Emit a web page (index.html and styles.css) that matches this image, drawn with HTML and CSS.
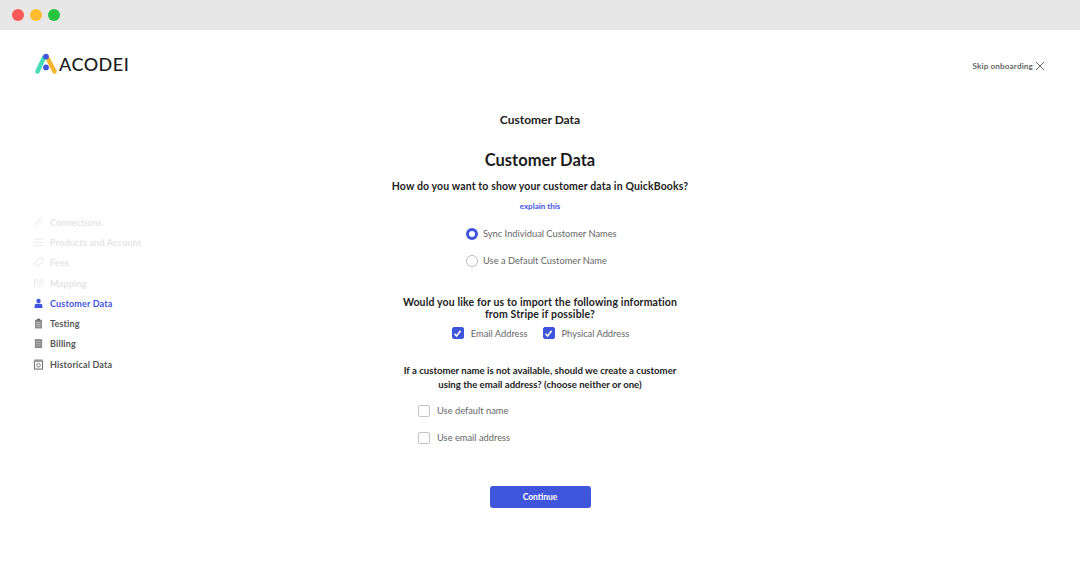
FILE: index.html
```html
<!DOCTYPE html>
<html lang="en">
<head>
    <meta charset="UTF-8">
    <title>Customer Data</title>
    <link rel="stylesheet" href="styles.css">
</head>
<body>

<!-- Window bar -->
<div class="window-bar">
    <span class="dot dot-red"></span>
    <span class="dot dot-yellow"></span>
    <span class="dot dot-green"></span>
</div>

<div class="header">
    <div class="logo">
        <svg class="logo-mark" width="22" height="22" viewBox="0 0 22 22">
            <path d="M2.5 18.5 L9 4.5" stroke="#43dcb4" stroke-width="4.4" stroke-linecap="round" fill="none"/>
            <path d="M13 6 L19.5 18.5" stroke="#f6b62d" stroke-width="4.4" stroke-linecap="round" fill="none"/>
            <circle cx="11" cy="3.6" r="2.9" fill="#3f55dc"/>
            <circle cx="11" cy="14.4" r="2.9" fill="#3f55dc"/>
        </svg>
        <span class="logo-text">ACODEI</span>
    </div>
    <div class="skip">
        <span>Skip onboarding</span>
        <svg width="10" height="10" viewBox="0 0 10 10">
            <path d="M1 1 L9 9 M9 1 L1 9" stroke="#555" stroke-width="0.9" fill="none"/>
        </svg>
    </div>
</div>

<div class="layout">
    <!-- Steps -->
    <ul class="steps">
        <li class="step faded">
            <svg class="step-icon" viewBox="0 0 12 12"><path d="M2 8 L7 2.5 Q8.5 1.2 10 2.3 Q11 3.6 9.7 5 L5 10 Q3.6 11 2.4 10 Q1.2 9 2 8 Z M4.5 7.5 L7.7 4.3" stroke="#8a8a8a" fill="none"/></svg>
            Connections
        </li>
        <li class="step faded">
            <svg class="step-icon" viewBox="0 0 12 12"><path d="M1 2.5 H11 M1 6 H11 M1 9.5 H11" stroke="#8a8a8a" stroke-width="1.2" fill="none"/></svg>
            Products and Account
        </li>
        <li class="step faded">
            <svg class="step-icon" viewBox="0 0 12 12"><path d="M1.5 7 L7 1.5 H10.5 V5 L5 10.5 Z" stroke="#8a8a8a" stroke-width="1.2" fill="none"/></svg>
            Fees
        </li>
        <li class="step faded">
            <svg class="step-icon" viewBox="0 0 12 12"><path d="M1.5 2 V10 M4.5 2 V8 M7.5 2 V10 M10.5 2 V8 M1.5 2 H4.5 M7.5 2 H10.5" stroke="#8a8a8a" stroke-width="1.2" fill="none"/></svg>
            Mapping
        </li>
        <li class="step active">
            <svg class="step-icon" viewBox="0 0 12 12"><circle cx="6" cy="3.2" r="2.4" fill="#3f55dc"/><path d="M1.7 11 V8.6 Q1.7 6.4 4 6.4 H8 Q10.3 6.4 10.3 8.6 V11 Z" fill="#3f55dc"/></svg>
            Customer Data
        </li>
        <li class="step">
            <svg class="step-icon" viewBox="0 0 12 12"><rect x="2.2" y="2" width="7.6" height="9.4" fill="#8c8c8c"/><rect x="4.2" y="0.8" width="3.6" height="2" fill="#666"/><path d="M3.6 5 H8.4 M3.6 7 H8.4 M3.6 9 H8.4" stroke="#ddd" stroke-width="0.7"/></svg>
            Testing
        </li>
        <li class="step">
            <svg class="step-icon" viewBox="0 0 12 12"><rect x="2" y="1.2" width="8" height="9.8" fill="#8c8c8c"/><path d="M3.5 3.6 H8.5 M3.5 5.8 H8.5 M3.5 8 H8.5" stroke="#bbb" stroke-width="0.8"/></svg>
            Billing
        </li>
        <li class="step">
            <svg class="step-icon" viewBox="0 0 12 12"><rect x="1.6" y="2.4" width="8.8" height="8.6" fill="none" stroke="#777" stroke-width="1.2"/><path d="M1.6 1.2 H10.4" stroke="#777" stroke-width="1.2"/><circle cx="6" cy="6.8" r="2" fill="none" stroke="#777"/></svg>
            Historical Data
        </li>
    </ul>

    <!-- Onboarding form -->
    <div class="form-col">
        <div class="crumb">Customer Data</div>
        <h1>Customer Data</h1>
        <h2 class="question-main">How do you want to show your customer data in QuickBooks?</h2>
        <a class="explain">explain this</a>

        <div class="radio-group">
            <label class="option"><span class="radio checked"></span>Sync Individual Customer Names</label>
            <label class="option"><span class="radio"></span>Use a Default Customer Name</label>
        </div>

        <h3 class="question-import">Would you like for us to import the following information<br>from Stripe if possible?</h3>
        <div class="check-row">
            <label class="option">
                <span class="box checked"><svg width="9" height="9" viewBox="0 0 9 9"><path d="M1.5 4.8 L3.6 7 L7.6 1.8" stroke="#fff" stroke-width="1.6" fill="none"/></svg></span>
                Email Address
            </label>
            <label class="option">
                <span class="box checked"><svg width="9" height="9" viewBox="0 0 9 9"><path d="M1.5 4.8 L3.6 7 L7.6 1.8" stroke="#fff" stroke-width="1.6" fill="none"/></svg></span>
                Physical Address
            </label>
        </div>

        <h3 class="question-name">If a customer name is not available, should we create a customer<br>using the email address? (choose neither or one)</h3>
        <div class="check-stack">
            <label class="option"><span class="box"></span>Use default name</label>
            <label class="option"><span class="box"></span>Use email address</label>
        </div>

        <button type="button">Continue</button>
    </div>
</div>

</body>
</html>
```

FILE: styles.css
```css
body {
    font-family: "Lato", "Open Sans", sans-serif;
    margin: 0;
    padding: 0;
    background-color: #fff;
    color: #222;
    height: 576px;
    overflow: hidden;
}

/* Window bar */
.window-bar {
    height: 30px;
    background-color: #e8e7e8;
    display: flex;
    align-items: center;
    gap: 6px;
    padding: 0 0 0 12px;
    box-sizing: border-box;
}

.dot {
    width: 12px;
    height: 12px;
    border-radius: 50%;
}

.dot-red { background-color: #fd5a57; }
.dot-yellow { background-color: #fdbb2e; }
.dot-green { background-color: #27c440; }

/* Header */
.header {
    display: flex;
    justify-content: space-between;
    align-items: center;
    height: 22px;
    padding: 23px 35px 0 35px;
}

.logo {
    display: flex;
    align-items: center;
    gap: 2px;
}

.logo-text {
    font-size: 18px;
    font-weight: 500;
    letter-spacing: 0.5px;
    color: #1c1c1c;
}

.skip {
    display: flex;
    align-items: center;
    gap: 2px;
    font-size: 8.1px;
    font-weight: 700;
    color: #666;
    letter-spacing: 0.15px;
    padding-top: 3px;
}

/* Layout */
.layout {
    display: grid;
    grid-template-columns: 1fr 400px 1fr;
}

/* Steps */
.steps {
    list-style: none;
    margin: 0;
    padding: 137px 0 0 33px;
}

.step {
    display: flex;
    align-items: center;
    gap: 6px;
    height: 20.3px;
    font-size: 9px;
    font-weight: 700;
    color: #555;
    letter-spacing: 0.17px;
}

.step.faded {
    opacity: 0.16;
}

.step.active {
    color: #3f55dc;
}

.step-icon {
    width: 11px;
    height: 11px;
    flex: none;
}

/* Form */
.form-col {
    display: flex;
    flex-direction: column;
    align-items: center;
    text-align: center;
}

.crumb {
    font-size: 12px;
    font-weight: 700;
    color: #222;
    margin-top: 38px;
    line-height: 14px;
}

h1 {
    font-size: 16.5px;
    font-weight: 700;
    color: #1c1c1c;
    margin: 23px 0 0 0;
    line-height: 20px;
}

.question-main {
    font-size: 10.5px;
    font-weight: 700;
    color: #222;
    margin: 9px 0 0 0;
    line-height: 14px;
    letter-spacing: 0.125px;
}

.explain {
    font-size: 8px;
    font-weight: 700;
    color: #3f55dc;
    margin-top: 8px;
    line-height: 10px;
}

.option {
    display: flex;
    align-items: center;
    font-size: 9.3px;
    color: #666;
    white-space: nowrap;
}

.radio-group {
    display: flex;
    flex-direction: column;
    align-items: flex-start;
    gap: 14px;
    margin-top: 16px;
    width: 150px;
}

.radio {
    width: 12px;
    height: 12px;
    box-sizing: border-box;
    border-radius: 50%;
    border: 1px solid #bbb;
    margin: 0 5px 0 1px;
    flex: none;
}

.radio.checked {
    border: 3.5px solid #3f55dc;
    background-color: #fff;
}

.radio-group .option {
    height: 13px;
}

.question-import {
    font-size: 10.5px;
    font-weight: 700;
    color: #222;
    margin: 29px 0 0 0;
    line-height: 12px;
    letter-spacing: 0.15px;
}

.check-row {
    display: flex;
    gap: 15px;
    margin-top: 7px;
    padding-left: 1px;
}

.box {
    width: 12px;
    height: 12px;
    box-sizing: border-box;
    border: 1px solid #c4c4c4;
    border-radius: 2px;
    margin-right: 7px;
    display: flex;
    align-items: center;
    justify-content: center;
    flex: none;
}

.box.checked {
    background-color: #3f55dc;
    border-color: #3f55dc;
}

.question-name {
    font-size: 9.6px;
    font-weight: 700;
    color: #222;
    margin: 25px 0 0 0;
    line-height: 14px;
}

.check-stack {
    display: flex;
    flex-direction: column;
    align-items: flex-start;
    gap: 14px;
    margin-top: 12px;
    width: 246px;
}

.check-stack .option {
    height: 13px;
    padding-left: 1px;
}

button {
    background-color: #3f55dc;
    color: #fff;
    font-family: inherit;
    font-size: 8.5px;
    font-weight: 700;
    width: 101px;
    height: 21.5px;
    border: none;
    border-radius: 3px;
    margin-top: 42px;
}
```
